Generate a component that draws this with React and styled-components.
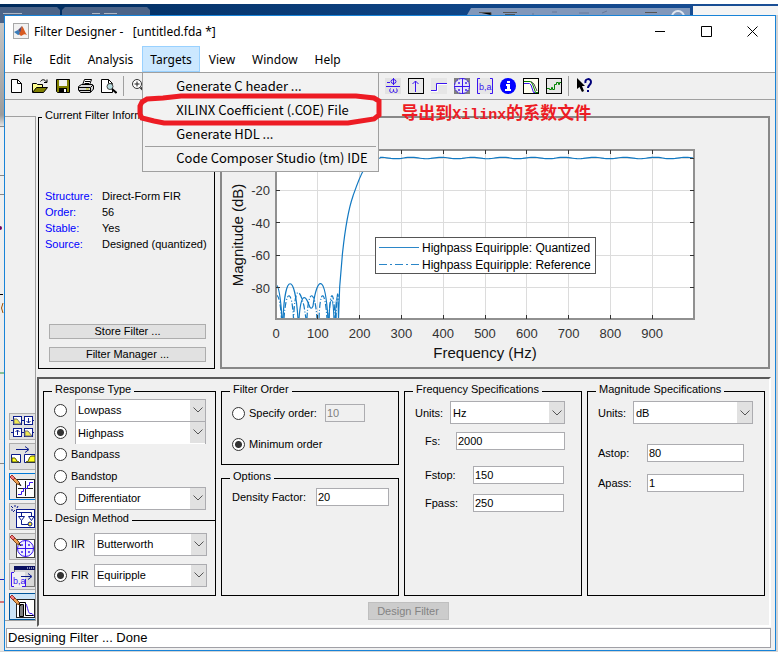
import React from "react";
import styled, { createGlobalStyle, css } from "styled-components";

const BLUE = "#3a14f0";
const NAVY = "#0a1a8c";

const xAt = (hz) => 276 + hz * 0.418;
const yAt = (db) => 158 - db * 1.62;

/* ---------- icons ---------- */

const Icon = ({ size = 16, children }) => (
  <svg
    width={size}
    height={size}
    viewBox={`0 0 ${size} ${size}`}
    fill="none"
    aria-hidden="true"
  >
    {children}
  </svg>
);

const Pencil = () => (
  <g>
    <path d="M2 1 L9 8 L10 11 L7 10 L0 3Z" fill="#f0a050" stroke="#7a4a20" />
    <path d="M2 1 L5 4 L3 6 L0 3Z" fill="#f08080" stroke="#a03030" />
    <path d="M9 9 L11 12" stroke="#000" />
  </g>
);

const NewIcon = () => (
  <Icon>
    <path d="M2.5 1.5 H8.5 L12.5 5.5 V14.5 H2.5Z" fill="#fff" stroke="#000" />
    <path d="M8.5 1.5 V5.5 H12.5" stroke="#000" />
  </Icon>
);

const OpenIcon = () => (
  <Icon>
    <path d="M0.5 14 V5.5 H4.5 L5.5 6.5 H10.5 V9" fill="#ffff90" stroke="#000" />
    <path d="M0.5 14.5 L4.5 9.5 H15.5 L11.5 14.5Z" fill="#808000" stroke="#000" />
    <path d="M8.5 3.5 C10 1 13 1 14.5 4.5 M12 4.5 H15 V1.5" stroke="#000" />
  </Icon>
);

const SaveIcon = () => (
  <Icon>
    <path d="M1.5 1.5 H14.5 V14.5 H2.5 L1.5 13.5Z" fill="#808000" stroke="#000" />
    <path d="M4 2 H12 V8 H4Z" fill="#f0f0f0" />
    <path d="M4 10 H12 V15 H4Z" fill="#000" />
    <path d="M9 11 H11 V14 H9Z" fill="#fff" />
  </Icon>
);

const PrintIcon = () => (
  <Icon>
    <path d="M4.5 7 L6.5 1.5 H13.5 L11.5 7" fill="#fff" stroke="#000" />
    <path d="M7 3.5 H12 M6.5 5.5 H11" stroke="#000" />
    <path d="M0.5 8.5 L3.5 6.5 H14.5 L15.5 8 V11 L12.5 14.5 H2.5 L0.5 12Z" fill="#d8d8d8" stroke="#000" />
    <path d="M1 9.5 H12.5 L15 7 M1 12.5 H12.5 M12.5 10 V14" stroke="#000" />
    <path d="M8 11 H11" stroke="#c0c000" />
  </Icon>
);

const PreviewIcon = () => (
  <Icon>
    <path d="M0.5 1.5 H7.5 L11.5 5.5 V14.5 H0.5Z" fill="#fff" stroke="#000" />
    <path d="M7.5 1.5 V5.5 H11" stroke="#000" />
    <circle cx="9" cy="8.5" r="3" fill="#b8dce0" stroke="#444" />
    <path d="M11 11 L15.5 15" stroke="#000" strokeWidth="2" />
  </Icon>
);

const ZoomInIcon = () => (
  <Icon>
    <circle cx="6" cy="6" r="4.5" fill="#fff" stroke="#333" />
    <path d="M3.5 6 H8.5 M6 3.5 V8.5" stroke="#222" />
    <path d="M9.5 9.5 L14 14" stroke="#333" strokeWidth="2" />
  </Icon>
);

const PhaseDelayIcon = () => (
  <Icon>
    <rect width="16" height="16" fill="#e2e2e2" />
    <path d="M1 8.5 H15 M2 4.5 H5 M8.5 0 V7" stroke={BLUE} />
    <ellipse cx="8.5" cy="3.5" rx="2.5" ry="2" stroke={BLUE} />
    <path
      d="M5.5 10.5 C4 12 5 15 6.5 14.5 C8 14.5 8.5 13 8.5 11.5 C8.5 13 9 14.5 10.5 14.5 C12.5 15 12.5 12 11.5 10.5"
      stroke={BLUE}
    />
  </Icon>
);

const ImpulseIcon = () => (
  <Icon>
    <rect x="0.5" y="0.5" width="15" height="15" fill="#e8e8e8" stroke="#000" />
    <path d="M7.5 14 V3 M4.5 6 L7.5 3 L10.5 6" stroke={BLUE} />
  </Icon>
);

const StepIcon = () => (
  <Icon>
    <rect width="16" height="16" fill="#e6e6e6" />
    <path d="M0 13.5 H6.5 V6.5 H16" stroke="#fff" />
    <path d="M0 12.5 H5.5 V5.5 H16" stroke={BLUE} />
  </Icon>
);

const PoleZeroIcon = () => (
  <Icon>
    <rect width="16" height="16" fill="#808080" />
    <circle cx="8" cy="8" r="7.5" fill="#e8e8f4" stroke={BLUE} strokeDasharray="3 1" />
    <path d="M0 8.5 H16 M8.5 0 V16" stroke={BLUE} />
    <path
      d="M4 4 L6 6 M6 4 L4 6 M11 4 L13 6 M13 4 L11 6 M4 11 L6 13 M6 11 L4 13 M11 11 L13 13 M13 11 L11 13"
      stroke={BLUE}
      strokeWidth="0.7"
    />
  </Icon>
);

const CoefficientsIcon = () => (
  <Icon>
    <rect width="16" height="16" fill="#e6e6e6" />
    <path d="M3 0.5 H0.5 V15.5 H3 M13 0.5 H15.5 V15.5 H13" stroke={BLUE} />
    <text x="2" y="12" fontFamily="Liberation Sans, sans-serif" fontSize="9" fill={BLUE}>
      b,a
    </text>
  </Icon>
);

const InfoIcon = () => (
  <Icon>
    <circle cx="8" cy="8" r="8" fill="#0000ff" />
    <rect x="7" y="3" width="3" height="2" fill="#fff" />
    <path d="M6 6 H10 V11 H11 V13 H5 V11 H7 V8 H6Z" fill="#fff" />
  </Icon>
);

const MagnitudeSpecIcon = () => (
  <Icon>
    <rect x="0.5" y="0.5" width="15" height="15" fill="#fffff0" stroke="#000" />
    <path d="M1 3.5 H7.5 L9.5 6 L12.5 14.5 H15" stroke="#008000" />
    <path d="M1 5.5 H6.5 L8 7 L10.5 14.5 H12" stroke={BLUE} />
    <path d="M8 3.5 L11 6 L14 13" stroke="#000" strokeWidth="0.7" />
  </Icon>
);

const NoiseIcon = () => (
  <Icon>
    <rect x="0.5" y="0.5" width="15" height="15" fill="#e6e6e6" stroke="#000" />
    <path
      d="M1 10.5 H3.5 V11.5 H5.5 V9.5 H6.5 V11.5 H8.5 V6.5 H10.5 V4.5 H12.5 V6.5 H13.5 V4.5 H15"
      stroke="#008000"
    />
  </Icon>
);

const HelpIcon = () => (
  <Icon>
    <path d="M1 0 V11 L3.5 9 L6 14 L8 13 L6 8 H9Z" fill="#000" />
    <path d="M9.5 5 C8.5 0 15 0 15 4 C15 7 12 7 12 10" stroke="#00007a" strokeWidth="2" />
    <rect x="11" y="12" width="2" height="2" fill="#00007a" />
  </Icon>
);

const MultirateIcon = () => (
  <Icon size={25}>
    <path d="M1 6.5 H24 M1 18.5 H24" stroke={NAVY} />
    <g fill="#fff" stroke={NAVY}>
      <rect x="3.5" y="2.5" width="8" height="8" />
      <rect x="14.5" y="2.5" width="8" height="8" />
      <rect x="3.5" y="14.5" width="8" height="8" />
      <rect x="14.5" y="14.5" width="8" height="8" />
    </g>
    <path d="M4 5 H7 L11 10 H4Z M15 17 H18 L22 22 H15Z" fill="#f0e850" stroke="#777" />
    <path d="M18.5 4 V9 M16.5 7 L18.5 9 L20.5 7 M7.5 21 V16 M5.5 18 L7.5 16 L9.5 18" stroke={NAVY} />
  </Icon>
);

const TransformIcon = () => (
  <Icon size={25}>
    <path d="M6 5.5 H18 M15 2.5 L19 5.5 L15 8.5" stroke={NAVY} />
    <path d="M1.5 10.5 H10.5 V18.5 H1.5Z M14.5 10.5 H25 V18.5 H14.5Z" fill="#fff" stroke={NAVY} />
    <path d="M2 14 H5 C6 14 6 18 9 18 H2Z M16 18 C20 18 18 12 22 12 H25 V18Z" fill="#ffff20" stroke="#555500" />
  </Icon>
);

const QuantizeIcon = () => (
  <Icon size={25}>
    <rect x="6.5" y="5.5" width="18" height="18" fill="#fff" stroke="#222" />
    <path d="M8 14.5 H23 M15.5 7 V22" stroke="#222" />
    <path d="M8 20.5 H11.5 V17.5 H13.5 V14.5 H17.5 V11.5 H19.5 V8.5 H23" stroke={BLUE} />
    <Pencil />
  </Icon>
);

const RealizeIcon = () => (
  <Icon size={25}>
    <path d="M1 2 L3 4 M5 1 V3 M8 2 L7 4 M1 6 H3 M3 8 L5 6" stroke={NAVY} />
    <rect x="6.5" y="5.5" width="18" height="18" fill="#fff" stroke={NAVY} />
    <path d="M7 8.5 H21.5 V13 M11.5 8.5 V20.5 H18" stroke={NAVY} />
    <path d="M8.5 12.5 H14.5 L11.5 16.5Z M18.5 12.5 H24 L21.5 16.5Z" fill="#fff" stroke={NAVY} />
    <circle cx="20" cy="20" r="2" fill="#ffe820" stroke={NAVY} />
  </Icon>
);

const PoleEditorIcon = () => (
  <Icon size={25}>
    <rect x="6.5" y="5.5" width="18" height="18" fill="#fff" stroke="#444" />
    <circle cx="15.5" cy="14.5" r="8" fill="#eeeeff" stroke={BLUE} />
    <path d="M7 14.5 H24 M15.5 6 V23" stroke={BLUE} />
    <path
      d="M11 10 L13 12 M13 10 L11 12 M18 10 L20 12 M20 10 L18 12 M11 17 L13 19 M13 17 L11 19 M18 17 L20 19 M20 17 L18 19"
      stroke={BLUE}
      strokeWidth="0.7"
    />
    <Pencil />
  </Icon>
);

const ImportIcon = () => (
  <Icon size={25}>
    <rect x="4.5" y="2.5" width="20" height="20" fill="#d8d8d8" stroke="#777" />
    <rect x="4" y="2" width="21" height="4" fill="#0a1060" />
    <path d="M17 4 H24" stroke="#fff" strokeDasharray="1 1" />
    <rect x="1" y="8" width="14" height="15" fill="#f0f0f0" />
    <path d="M4 8.5 H1.5 V22.5 H4 M12 22.5 H15.5 V15" stroke={BLUE} />
    <text x="3" y="20" fontFamily="Liberation Sans, sans-serif" fontSize="9" fill={BLUE}>
      b,a
    </text>
    <path d="M11 12.5 H21 M18 9.5 L22 12.5 L18 15.5" stroke={NAVY} />
  </Icon>
);

const DesignIcon = () => (
  <Icon size={25}>
    <rect x="6.5" y="5.5" width="18" height="18" fill="#fff" stroke="#222" />
    <path d="M9.5 10.5 H13.5 V22.5 H9.5Z" fill="#808080" stroke="#000" />
    <path d="M8 8.5 H15.5 V21.5 H24" stroke="#000" />
    <path d="M16 10 C18 14 18 19 20 19.5 H22 L24 22" stroke={BLUE} />
    <Pencil />
  </Icon>
);

const MatlabIcon = () => (
  <Icon>
    <rect x="0.5" y="0.5" width="15" height="15" fill="#f2f2f2" stroke="#a8a8a8" />
    <path d="M1 9 L5 7 L8 11 L5 12Z" fill="#3a7cb8" />
    <path d="M5 7 L9 3 L8 11Z" fill="#5a4a70" />
    <path d="M9 3 C11 5 12 10 14 12 C11 10 10 12 8 13 L6 11 C8 9 8 6 9 3Z" fill="#d85a20" />
  </Icon>
);

/* ---------- data ---------- */

const menus = ["File", "Edit", "Analysis", "Targets", "View", "Window", "Help"];

const fileTools = [
  ["New", NewIcon],
  ["Open", OpenIcon],
  ["Save", SaveIcon],
  ["Print", PrintIcon],
  ["Print preview", PreviewIcon],
];

const analysisTools = [
  ["Phase delay", PhaseDelayIcon],
  ["Impulse response", ImpulseIcon],
  ["Step response", StepIcon],
  ["Pole-zero plot", PoleZeroIcon],
  ["Filter coefficients", CoefficientsIcon],
  ["Filter information", InfoIcon],
  ["Magnitude response estimate", MagnitudeSpecIcon],
  ["Round-off noise", NoiseIcon],
];

const sideTools = [
  ["Create a multirate filter", MultirateIcon],
  ["Transform filter", TransformIcon],
  ["Set quantization parameters", QuantizeIcon, "focus"],
  ["Realize model", RealizeIcon],
  ["Pole-zero editor", PoleEditorIcon],
  ["Import filter", ImportIcon],
  ["Design filter", DesignIcon, "active"],
];

const filterInfo = [
  ["Structure:", "Direct-Form FIR"],
  ["Order:", "56"],
  ["Stable:", "Yes"],
  ["Source:", "Designed (quantized)"],
];

/* ---------- parts ---------- */

function Dropdown({ id, value, width, label, open }) {
  return (
    <SelectBox $width={width}>
      <Select id={id} aria-label={label} defaultValue={value} $open={open}>
        <option>{value}</option>
      </Select>
      <Arrow>
        <svg width="10" height="6" viewBox="0 0 10 6" fill="none" aria-hidden="true">
          <path d="M0.5 0.5 L5 5 L9.5 0.5" stroke="#555" />
        </svg>
      </Arrow>
    </SelectBox>
  );
}

function Radio({ name, label, text, checked, width }) {
  return (
    <RadioLabel $width={width}>
      <input type="radio" name={name} aria-label={label} defaultChecked={checked} />
      {text}
    </RadioLabel>
  );
}

function Field({ id, label, value, top, indent, labelWidth, width }) {
  return (
    <FieldRow $top={top} $indent={indent}>
      <FieldLabel htmlFor={id} $width={labelWidth}>
        {label}
      </FieldLabel>
      <TextInput id={id} defaultValue={value} $width={width} />
    </FieldRow>
  );
}

function passband() {
  let d = "";
  for (let hz = 250; hz <= 1000; hz += 5) {
    d += ` L${xAt(hz)} ${yAt(0.45 * Math.cos(((hz - 250) / 73) * Math.PI * 2))}`;
  }
  return d;
}

function ResponsePlot() {
  const hz = [0, 100, 200, 300, 400, 500, 600, 700, 800, 900];
  const db = [0, -20, -40, -60, -80];
  return (
    <svg viewBox="222 118 546 249" role="img" aria-label="Magnitude response">
      <rect x="276" y="150" width="418" height="169" fill="#fff" />
      <g stroke="#dcdcdc" shapeRendering="crispEdges">
        {hz.slice(1).map((f) => (
          <path key={f} d={`M${xAt(f)} 151 V318`} />
        ))}
        {db.map((v) => (
          <path key={v} d={`M277 ${yAt(v)} H693`} />
        ))}
      </g>
      <g fill="none" stroke="#1279c2" strokeWidth="1.2">
        <path
          d={`M276 284.5 Q280 286 282 319 M283 319 C285 272 295 272 298 319 M299 319 C301 290 306 296 309 305 Q311 311 313 306 C317 277 325 271 328 319 M329 319 C330 294 333 294 334 319 M335.5 319 C336 290 338 290 338.5 319 C339 280 344 222 353 196 C360 176 365 160 380 158${passband()}`}
        />
        <path
          d="M276 295 Q280 295 281.5 319 M284 319 C286 288 292 288 293.5 319 C295 287 299 286 304 306 L306 319 M307 319 C308 288 315 288 317 319 M319 319 C320 288 325 288 327 319 M329 319 C330 288 334 288 335 319 M336 319 C337 290 338 290 338.5 300"
          strokeDasharray="6 2 1 2"
        />
      </g>
      <rect x="276" y="150" width="418" height="169" fill="none" stroke="#909090" strokeWidth="2" />
      <g stroke="#333" shapeRendering="crispEdges">
        {hz.slice(1).map((f) => (
          <path key={f} d={`M${xAt(f)} 150 V154 M${xAt(f)} 319 V315`} />
        ))}
        {db.map((v) => (
          <path key={v} d={`M276 ${yAt(v)} H280 M694 ${yAt(v)} H690`} />
        ))}
      </g>
      <TickText textAnchor="middle">
        {hz.map((f) => (
          <text key={f} x={xAt(f)} y="338">
            {f}
          </text>
        ))}
      </TickText>
      <TickText textAnchor="end">
        {db.slice(1).map((v) => (
          <text key={v} x="270" y={yAt(v) + 5}>
            {v}
          </text>
        ))}
      </TickText>
      <AxisText x="485" y="358">
        Frequency (Hz)
      </AxisText>
      <AxisText transform="translate(243 235) rotate(-90)">Magnitude (dB)</AxisText>
      <rect x="375.5" y="237.5" width="220" height="36" fill="#fff" stroke="#555" />
      <g stroke="#2b86c8">
        <path d="M379 247.5 H419" />
        <path d="M379 264.5 H419" strokeDasharray="8 3 2 3" />
      </g>
      <LegendText x="422" y="252">
        Highpass Equiripple: Quantized
      </LegendText>
      <LegendText x="422" y="269">
        Highpass Equiripple: Reference
      </LegendText>
    </svg>
  );
}

function TargetsMenu() {
  return (
    <Popup role="menu">
      <PopupItem role="menuitem">Generate C header ...</PopupItem>
      <PopupItem role="menuitem">XILINX Coefficient (.COE) File</PopupItem>
      <PopupItem role="menuitem">Generate HDL ...</PopupItem>
      <PopupItem role="menuitem" $divided>
        Code Composer Studio (tm) IDE
      </PopupItem>
      <RedRing viewBox="0 0 248 34" aria-hidden="true">
        <path
          d="M4 13 L6 9 L11 6 L27 5 L45 3 H220 L238 5 L243 8 V22 L238 26 L212 30 H28 L18 28 L6 25 L4 21Z"
          fill="none"
          stroke="#ed1c24"
          strokeWidth="5"
        />
      </RedRing>
      <Note>
        导出到<span>Xilinx</span>的系数文件
      </Note>
    </Popup>
  );
}

function App() {
  return (
    <Desktop>
      <GlobalStyle />
      <Banner>
        <svg width="152" height="11" aria-hidden="true">
          <path d="M0 3 H57 L60 6 V11 H0Z M62 11 V6 L65 3 H147 L150 6 V11Z" fill="#4c6488" />
          <path d="M3 9.5 H22 M92 9.5 H100 M104 9.5 H117" stroke="#b0b8c4" />
        </svg>
        <BannerTools>
          <svg width="226" height="11" aria-hidden="true">
            <path d="M0 11 L4 4 H223 V11Z" fill="#8198bb" />
            <path d="M12 8.5 H24 V11 M36 8.5 H50 M178 8.5 H190 M38 10.5 H48" stroke="#555" />
            <path d="M66 9 V11 M85 8 H90 M112 9 H122 M135 9 L140 7" stroke="#66799a" />
            <circle cx="211" cy="13" r="6" fill="none" stroke="#dfe6f0" strokeWidth="2" />
          </svg>
          <BannerSearch />
        </BannerTools>
      </Banner>
      <Stage>
        <BackEdge>
          <svg width="4" height="630" aria-hidden="true">
            <rect width="4" height="8" fill="#4c6488" />
            <path d="M0 111.5 H4 M0 160.5 H4 M0 179.5 H4 M0 448.5 H4" stroke="#888" />
            <path d="M0 279.5 H3" stroke="#000" />
            <path d="M0 587 H4" stroke="#c00000" />
            <circle cx="0" cy="213" r="2" fill="#700060" />
            <path d="M3 288 Q0 293 3 298" stroke="#a05000" fill="none" />
            <path d="M0 564.5 H4" stroke="#2020c0" />
            <path d="M0 358 H4" stroke="#209040" />
          </svg>
        </BackEdge>
        <Window>
          <TitleBar>
            <MatlabIcon />
            <Title>Filter Designer - &nbsp; [untitled.fda *]</Title>
            <CaptionButton aria-label="Minimize">
              <Icon size={11}>
                <path d="M0 5.5 H10" stroke="#000" />
              </Icon>
            </CaptionButton>
            <CaptionButton aria-label="Maximize">
              <Icon size={11}>
                <path d="M0.5 0.5 H10.5 V10.5 H0.5Z" stroke="#000" />
              </Icon>
            </CaptionButton>
            <CaptionButton aria-label="Close">
              <Icon size={11}>
                <path d="M0.5 0.5 L10.5 10.5 M10.5 0.5 L0.5 10.5" stroke="#000" />
              </Icon>
            </CaptionButton>
          </TitleBar>

          <MenuBar>
            {menus.map((name) => (
              <MenuSlot key={name}>
                <MenuButton $open={name === "Targets"}>{name}</MenuButton>
                {name === "Targets" && <TargetsMenu />}
              </MenuSlot>
            ))}
          </MenuBar>

          <Toolbar>
            <ToolGroup $reserve>
              {fileTools.map(([label, Glyph]) => (
                <ToolButton key={label} aria-label={label}>
                  <Glyph />
                </ToolButton>
              ))}
              <Divider />
              <ToolButton aria-label="Zoom in">
                <ZoomInIcon />
              </ToolButton>
            </ToolGroup>
            <ToolGroup>
              {analysisTools.map(([label, Glyph]) => (
                <ToolButton key={label} aria-label={label}>
                  <Glyph />
                </ToolButton>
              ))}
              <Divider />
              <ToolButton aria-label="What's this?">
                <HelpIcon />
              </ToolButton>
            </ToolGroup>
          </Toolbar>

          <Body>
            <SideBar>
              {sideTools.map(([label, Glyph, state]) => (
                <SideButton key={label} aria-label={label} $state={state}>
                  <Glyph />
                </SideButton>
              ))}
            </SideBar>

            <Main>
              <Upper>
                <Group>
                  <Legend $tight>Current Filter Information</Legend>
                  <InfoBody>
                    <InfoList>
                      {filterInfo.map(([term, value]) => (
                        <React.Fragment key={term}>
                          <dt>{term}</dt>
                          <dd>{value}</dd>
                        </React.Fragment>
                      ))}
                    </InfoList>
                    <StoreButtons>
                      <PushButton>Store Filter ...</PushButton>
                      <PushButton>Filter Manager ...</PushButton>
                    </StoreButtons>
                  </InfoBody>
                </Group>
                <PlotPanel>
                  <ResponsePlot />
                </PlotPanel>
              </Upper>

              <DesignPanel>
                <Specs>
                  <Column>
                    <ResponseGroup>
                      <Legend>Response Type</Legend>
                      <Options>
                        <Choice>
                          <Radio name="response" label="Lowpass" width={21} />
                          <Dropdown label="Lowpass type" value="Lowpass" width={131} />
                        </Choice>
                        <Choice>
                          <Radio name="response" label="Highpass" width={21} checked />
                          <Dropdown label="Highpass type" value="Highpass" width={131} open />
                        </Choice>
                        <Choice>
                          <Radio name="response" text="Bandpass" />
                        </Choice>
                        <Choice>
                          <Radio name="response" text="Bandstop" />
                        </Choice>
                        <Choice>
                          <Radio name="response" label="Other response" width={21} />
                          <Dropdown label="Other type" value="Differentiator" width={131} />
                        </Choice>
                      </Options>
                    </ResponseGroup>
                    <MethodGroup>
                      <Legend>Design Method</Legend>
                      <Options $top={5} $gap={9}>
                        <Choice>
                          <Radio name="method" text="IIR" width={40} />
                          <Dropdown label="IIR method" value="Butterworth" width={113} />
                        </Choice>
                        <Choice>
                          <Radio name="method" text="FIR" width={40} checked />
                          <Dropdown label="FIR method" value="Equiripple" width={113} />
                        </Choice>
                      </Options>
                    </MethodGroup>
                  </Column>

                  <Column $gap={6}>
                    <OrderGroup>
                      <Legend>Filter Order</Legend>
                      <Options $top={3} $gap={9}>
                        <Choice>
                          <Radio name="order" text="Specify order:" width={93} />
                          <TextInput aria-label="Order" defaultValue="10" $width={40} disabled />
                        </Choice>
                        <Choice>
                          <Radio name="order" text="Minimum order" checked />
                        </Choice>
                      </Options>
                    </OrderGroup>
                    <GrowGroup>
                      <Legend>Options</Legend>
                      <Options>
                        <Field id="density" label="Density Factor:" value="20" top={2} labelWidth={84} width={73} />
                      </Options>
                    </GrowGroup>
                  </Column>

                  <Group>
                    <Legend>Frequency Specifications</Legend>
                    <Options>
                      <FieldRow $top={2}>
                        <FieldLabel htmlFor="freq-units" $width={35}>
                          Units:
                        </FieldLabel>
                        <Dropdown id="freq-units" value="Hz" width={115} />
                      </FieldRow>
                      <Field id="fs" label="Fs:" value="2000" top={8} indent labelWidth={31} width={109} />
                      <Field id="fstop" label="Fstop:" value="150" top={16} indent labelWidth={48} width={91} />
                      <Field id="fpass" label="Fpass:" value="250" top={10} indent labelWidth={48} width={91} />
                    </Options>
                  </Group>

                  <Group>
                    <Legend>Magnitude Specifications</Legend>
                    <Options>
                      <FieldRow $top={2}>
                        <FieldLabel htmlFor="mag-units" $width={35}>
                          Units:
                        </FieldLabel>
                        <Dropdown id="mag-units" value="dB" width={120} />
                      </FieldRow>
                      <Field id="astop" label="Astop:" value="80" top={20} labelWidth={49} width={97} />
                      <Field id="apass" label="Apass:" value="1" top={12} labelWidth={49} width={97} />
                    </Options>
                  </Group>
                </Specs>
                <Actions>
                  <DesignButton disabled>Design Filter</DesignButton>
                </Actions>
              </DesignPanel>
            </Main>
          </Body>

          <StatusBar>Designing Filter ... Done</StatusBar>
        </Window>
      </Stage>
    </Desktop>
  );
}

/* ---------- styles ---------- */

const menuFont = `12px "Noto Sans", sans-serif`;

const GlobalStyle = createGlobalStyle`
  * {
    box-sizing: border-box;
  }
  body {
    margin: 0;
    font-family: "Liberation Sans", Arial, sans-serif;
    font-size: 11px;
    color: #000;
  }
  button, input, select {
    font: inherit;
    color: inherit;
    margin: 0;
  }
`;

const Desktop = styled.div`
  min-height: 100vh;
  display: flex;
  flex-direction: column;
  padding-bottom: 1px;
  background: #d4d4d4;
`;

const Banner = styled.header`
  display: flex;
  justify-content: space-between;
  height: 15px;
  border-top: 4px solid #fff;
  background: linear-gradient(90deg, #002b5c, #0f4587 60%, #1a4f96);
`;

const BannerTools = styled.div`
  display: flex;
`;

const BannerSearch = styled.div`
  width: 85px;
  margin-top: 2px;
  background: #f4f4f4;
`;

const Stage = styled.div`
  flex: 1;
  display: flex;
  padding-right: 2px;
`;

const BackEdge = styled.div`
  width: 4px;
  overflow: hidden;
  background: linear-gradient(#c8c8c8, #9c9c9c 100px, #f0f0f0 113px, #e8e8e8);

  svg {
    display: block;
  }
`;

const Window = styled.main`
  flex: 1;
  min-width: 0;
  display: flex;
  flex-direction: column;
  border: 1px solid #1883d7;
  background: #f0f0f0;
`;

const TitleBar = styled.div`
  display: flex;
  align-items: center;
  height: 30px;
  padding-left: 8px;
  background: #fff;
`;

const Title = styled.h1`
  flex: 1;
  margin: 0 0 0 5px;
  font: ${menuFont};
`;

const CaptionButton = styled.button`
  display: grid;
  place-items: center;
  width: 46px;
  height: 28px;
  padding: 0;
  border: 0;
  background: none;
`;

const MenuBar = styled.nav`
  display: flex;
  gap: 1px;
  height: 26px;
  background: #fff;
`;

const MenuSlot = styled.div`
  position: relative;
`;

const MenuButton = styled.button`
  height: 26px;
  padding: 0 7px;
  border: 1px solid ${(p) => (p.$open ? "#99d1ff" : "transparent")};
  background: ${(p) => (p.$open ? "#cce8ff" : "none")};
  font: ${menuFont};
`;

const Popup = styled.div`
  position: absolute;
  z-index: 2;
  top: 26px;
  left: 0;
  width: 237px;
  padding: 1px 2px;
  border: 1px solid #a0a0a0;
  background: #f2f2f2;
`;

const PopupItem = styled.button`
  display: block;
  width: 100%;
  height: 24px;
  padding: 0 0 2px 31px;
  border: 0;
  background: none;
  font: 13px "Noto Sans CJK SC", "Noto Sans", sans-serif;
  text-align: left;
  white-space: nowrap;
  ${(p) =>
    p.$divided &&
    css`
      border-top: 1px solid #a0a0a0;
    `}
`;

const RedRing = styled.svg`
  position: absolute;
  top: 20px;
  left: -7px;
  width: 248px;
  height: 34px;
  pointer-events: none;
`;

const Note = styled.p`
  position: absolute;
  top: 27px;
  left: 258px;
  margin: 0;
  color: #ed1c24;
  font: bold 17px/24px "Noto Sans CJK SC", sans-serif;
  white-space: nowrap;

  span {
    font: bold 15px/24px "Liberation Mono", monospace;
  }
`;

const Toolbar = styled.div`
  display: flex;
  align-items: center;
  height: 28px;
  border-top: 1px solid #a0a0a0;
  border-bottom: 1px solid #a0a0a0;
`;

const ToolGroup = styled.div`
  display: flex;
  align-items: center;
  ${(p) =>
    p.$reserve &&
    css`
      width: 376px;
    `}
`;

const ToolButton = styled.button`
  display: grid;
  place-items: center;
  width: 23px;
  height: 22px;
  padding: 0;
  border: 0;
  background: none;
`;

const Divider = styled.div`
  width: 1px;
  height: 20px;
  margin: 0 3px;
  background: #a0a0a0;
`;

const Body = styled.div`
  flex: 1;
  display: flex;
`;

const SideBar = styled.aside`
  display: flex;
  flex-direction: column;
  justify-content: flex-end;
  align-items: flex-end;
  gap: 3px;
  width: 31px;
  margin: 16px 1px 6px 0;
  border: solid #a0a0a0;
  border-width: 1px 1px 1px 0;
`;

const sideStates = {
  focus: ["#0078d7", "#e8e8e8"],
  active: ["#005499", "#cce4f7"],
};

const SideButton = styled.button`
  width: 26px;
  height: 27px;
  padding: 0;
  border: solid ${(p) => (sideStates[p.$state] || ["#adadad"])[0]};
  border-width: 1px 0 1px 1px;
  background: ${(p) => (sideStates[p.$state] || ["", "#e1e1e1"])[1]};

  svg {
    display: block;
  }
`;

const Main = styled.div`
  flex: 1;
  min-width: 0;
  display: flex;
  flex-direction: column;
  gap: 8px;
  padding: 10px 4px 0 0;
`;

const Upper = styled.div`
  display: grid;
  grid-template-columns: 177px 1fr;
  gap: 5px;
  padding: 0 1px;
`;

const Group = styled.fieldset`
  display: block;
  min-width: 0;
  margin: 0;
  padding: 0;
  border: 1px solid #000;
`;

const Legend = styled.legend`
  height: 15px;
  margin-left: ${(p) => (p.$tight ? 3 : 8)}px;
  padding: 0 3px;
  line-height: 11px;
  white-space: nowrap;
`;

const ResponseGroup = styled(Group)`
  height: 136px;
  border-bottom: 0;
`;

const GrowGroup = styled(Group)`
  flex: 1;
`;

const MethodGroup = styled(GrowGroup)`
  margin-top: -7px;
`;

const OrderGroup = styled(Group)`
  height: 81px;
`;

const InfoBody = styled.div`
  display: flex;
  flex-direction: column;
  justify-content: space-between;
  height: 243px;
  padding: 63px 0 6px 6px;
`;

const InfoList = styled.dl`
  display: grid;
  grid-template-columns: 57px 1fr;
  margin: 0;
  line-height: 16px;
  white-space: nowrap;

  dt {
    color: #0000ff;
  }
  dd {
    margin: 0;
  }
`;

const StoreButtons = styled.div`
  display: flex;
  flex-direction: column;
  gap: 8px;
  padding: 0 8px 0 4px;
`;

const PushButton = styled.button`
  height: 15px;
  padding: 0;
  border: 1px solid #adadad;
  background: #e1e1e1;
  line-height: 13px;
`;

const PlotPanel = styled.section`
  margin-top: 6px;
  border: 2px solid #888;

  svg {
    display: block;
    width: 100%;
    height: 249px;
  }
`;

const TickText = styled.g`
  font-size: 13px;
  fill: #333;
`;

const AxisText = styled.text`
  font-size: 15px;
  fill: #111;
  text-anchor: middle;
`;

const LegendText = styled.text`
  font-size: 12px;
  fill: #000;
`;

const DesignPanel = styled.section`
  flex: 1;
  padding: 5px 4px 0;
  border: 2px solid #fff;
  border-top-color: #5a5a5a;
  border-left-color: #5a5a5a;
`;

const Specs = styled.div`
  display: grid;
  grid-template-columns: 173fr 178fr 178fr 178fr;
  gap: 5px;
  height: 212px;
`;

const Column = styled.div`
  display: flex;
  flex-direction: column;
  gap: ${(p) => p.$gap || 0}px;
`;

const Options = styled.div`
  display: flex;
  flex-direction: column;
  gap: ${(p) => p.$gap || 0}px;
  padding: ${(p) => p.$top || 0}px 0 0 10px;
`;

const Choice = styled.div`
  display: flex;
  align-items: center;
  height: 22px;
`;

const RadioLabel = styled.label`
  display: flex;
  align-items: center;
  gap: 4px;
  width: ${(p) => (p.$width ? `${p.$width}px` : "auto")};
  white-space: nowrap;

  input {
    appearance: none;
    width: 13px;
    height: 13px;
    border: 1px solid #333;
    border-radius: 50%;
    background: #fff;
  }
  input:checked {
    background: radial-gradient(circle, #333 0 3px, #fff 4px);
  }
`;

const SelectBox = styled.div`
  display: grid;
  width: ${(p) => p.$width}px;
  height: 23px;
`;

const Select = styled.select`
  grid-area: 1 / 1;
  appearance: none;
  width: 100%;
  padding: 0 18px 0 2px;
  border: 1px solid #acacb0;
  border-radius: 0;
  background: #fff;
  ${(p) =>
    p.$open &&
    css`
      border-bottom: 0;
    `}
`;

const Arrow = styled.span`
  grid-area: 1 / 1;
  justify-self: end;
  display: grid;
  place-items: center;
  width: 15px;
  margin: 1px;
  background: #e1e1e1;
  pointer-events: none;
`;

const FieldRow = styled.div`
  display: flex;
  align-items: center;
  margin-top: ${(p) => p.$top}px;
  padding-left: ${(p) => (p.$indent ? 10 : 0)}px;
`;

const FieldLabel = styled.label`
  width: ${(p) => p.$width}px;
  white-space: nowrap;
`;

const TextInput = styled.input`
  width: ${(p) => p.$width}px;
  height: 18px;
  padding: 0 1px;
  border: 1px solid #acacb0;
  background: #fff;

  &:disabled {
    background: #f0f0f0;
    color: #808080;
  }
`;

const Actions = styled.div`
  display: flex;
  justify-content: center;
  padding: 6px 0 0 8px;
`;

const DesignButton = styled(PushButton)`
  width: 81px;
  height: 18px;
  border-color: #bfbfbf;
  background: #ccc;
  color: #838383;
`;

const StatusBar = styled.footer`
  height: 20px;
  margin: 1px 4px 2px 1px;
  padding-left: 1px;
  border: 1px solid #a0a0a6;
  background: #fff;
  font-size: 13px;
  line-height: 18px;
`;

export default App;
